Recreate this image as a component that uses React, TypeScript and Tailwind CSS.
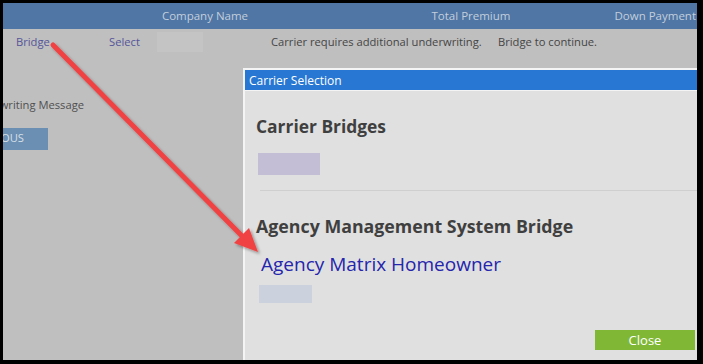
import React from "react";

const font = { fontFamily: '"Open Sans", "Noto Sans", sans-serif' };

function Arrow() {
  // red annotation arrow from the "Bridge" link to the AMS entry
  return (
    <svg className="absolute inset-0 pointer-events-none" width={703} height={364}>
      <defs>
        <filter id="sh" x="-20%" y="-20%" width="140%" height="140%">
          <feDropShadow dx="2" dy="2" stdDeviation="1.5" floodColor="#000" floodOpacity="0.35" />
        </filter>
      </defs>
      <g filter="url(#sh)">
        <line x1={53} y1={45} x2={244} y2={238} stroke="#f04343" strokeWidth={5} strokeLinecap="round" />
        <polygon points="258,252 234,243 249,228" fill="#f04343" />
      </g>
    </svg>
  );
}

export default function App() {
  return (
    <div className="relative w-[703px] h-[364px] bg-black overflow-hidden" style={font}>
      <div className="absolute left-[3px] top-[3px] right-[6px] bottom-[4px] bg-[#bfbfbf] overflow-hidden">
        {/* grid header */}
        <div className="flex h-[26px] items-center bg-[#4f76a4] text-[11.5px] text-[#c3cedd] whitespace-nowrap">
          <div className="w-[404px] text-center">Company Name</div>
          <div className="w-[128px] text-center">Total Premium</div>
          <div className="flex-1 text-right pr-[1px]">Down Payment</div>
        </div>

        {/* grid row */}
        <div className="flex items-center h-[26px] text-[11.2px] text-[#454545] whitespace-nowrap">
          <span className="ml-[13px] w-[93px] text-[#55559a]">Bridge</span>
          <span className="w-[48px] text-[#55559a]">Select</span>
          <span className="w-[46px] h-[20px] bg-[#c4c4c4]" />
          <span className="ml-[68px] w-[227px]">Carrier requires additional underwriting.</span>
          <span>Bridge to continue.</span>
        </div>

        <div className="mt-[42px] w-[81px] flex justify-end overflow-hidden whitespace-nowrap text-[11.2px] text-[#505050]">
          <span className="shrink-0">Underwriting Message</span>
        </div>
        <div className="mt-[14px] w-[45px] h-[22px] bg-[#6a8fb2] text-[#d6dfe8] text-[11.2px] flex items-center justify-end overflow-hidden whitespace-nowrap pr-[24px]">
          <span className="shrink-0">PREVIOUS</span>
        </div>

        {/* modal */}
        <div className="absolute left-[240px] top-[65px] w-[470px] h-[300px] border-2 border-[#f4f4f4] bg-[#e0e0e0] flex flex-col">
          <div className="h-[21px] bg-[#2878d3] text-white text-[12px] flex items-center pl-[4px] pt-px border-b border-[#f4f4f4]">
            Carrier Selection
          </div>
          <div className="flex flex-col pl-[11px] text-[#3f3f3f]">
            <div className="mt-[23px] text-[17.4px] font-bold leading-[24px]">Carrier Bridges</div>
            <div className="mt-[15px] ml-[2px] w-[62px] h-[22px] bg-[#c3bed6]" />
            <div className="mt-[15px] ml-[4px] h-px bg-[#cfcfcf]" />
            <div className="mt-[23px] text-[17.8px] font-bold leading-[24px]">Agency Management System Bridge</div>
            <div className="mt-[14px] ml-[5px] text-[19px] leading-[24px] text-[#2525ad]">Agency Matrix Homeowner</div>
            <div className="mt-[9px] ml-[3px] w-[53px] h-[18px] bg-[#ccd2dd]" />
            <div className="mt-[27px] flex justify-end pr-[16px]">
              <button className="w-[100px] h-[20px] bg-[#80b836] text-white text-[13px] leading-[20px]">Close</button>
            </div>
          </div>
        </div>
      </div>
      <Arrow />
    </div>
  );
}
